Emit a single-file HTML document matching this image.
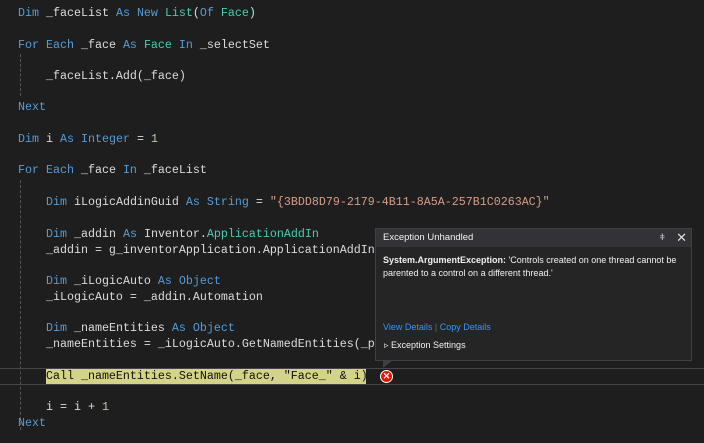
<!DOCTYPE html>
<html><head><style>
body{margin:0;width:704px;height:443px;background:#1e1e1e;overflow:hidden;position:relative;font-family:"Liberation Mono",monospace;}
.l{position:absolute;left:18px;font-size:11.67px;line-height:16px;color:#dcdcdc;white-space:pre;}
.k{color:#569cd6}.t{color:#4ec9b0}.s{color:#d69d85}.n{color:#b5cea8}
.g{position:absolute;left:20px;width:0;border-left:1px dashed #555;}
#pop{position:absolute;left:375px;top:228px;width:315px;height:131px;background:#252526;border:1px solid #3f3f46;font-family:"Liberation Sans",sans-serif;font-size:9px;color:#f1f1f1;}
#hd{height:18px;background:#333337;line-height:18px;padding-left:7px;font-size:9.5px;}
</style></head><body>
<div class="g" style="top:54px;height:42px"></div>
<div class="g" style="top:180px;height:250px"></div>
<div style="position:absolute;left:0;top:368px;width:704px;height:15px;border-top:1px solid #464646;border-bottom:1px solid #464646"></div>
<div style="position:absolute;left:46px;top:369px;width:320px;height:15px;background:#d3d38a"></div>
<div class="l" style="top:5px"><span class="k">Dim</span> _faceList <span class="k">As New</span> <span class="t">List</span>(<span class="k">Of</span> <span class="t">Face</span>)</div>
<div class="l" style="top:37px"><span class="k">For Each</span> _face <span class="k">As</span> <span class="t">Face</span> <span class="k">In</span> _selectSet</div>
<div class="l" style="top:68px">    _faceList.Add(_face)</div>
<div class="l" style="top:99px"><span class="k">Next</span></div>
<div class="l" style="top:131px"><span class="k">Dim</span> i <span class="k">As Integer</span> = <span class="n">1</span></div>
<div class="l" style="top:162px"><span class="k">For Each</span> _face <span class="k">In</span> _faceList</div>
<div class="l" style="top:194px">    <span class="k">Dim</span> iLogicAddinGuid <span class="k">As String</span> = <span class="s">"{3BDD8D79-2179-4B11-8A5A-257B1C0263AC}"</span></div>
<div class="l" style="top:226px">    <span class="k">Dim</span> _addin <span class="k">As</span> Inventor.<span class="t">ApplicationAddIn</span></div>
<div class="l" style="top:242px">    _addin = g_inventorApplication.ApplicationAddIns</div>
<div class="l" style="top:273px">    <span class="k">Dim</span> _iLogicAuto <span class="k">As Object</span></div>
<div class="l" style="top:289px">    _iLogicAuto = _addin.Automation</div>
<div class="l" style="top:320px">    <span class="k">Dim</span> _nameEntities <span class="k">As Object</span></div>
<div class="l" style="top:336px">    _nameEntities = _iLogicAuto.GetNamedEntities(_pa</div>
<div class="l" style="top:368px;color:#111">    Call _nameEntities.SetName(_face, "Face_" &amp; i)</div>
<div class="l" style="top:399px">    i = i + <span class="n">1</span></div>
<div class="l" style="top:415px"><span class="k">Next</span></div>
<div style="position:absolute;left:380px;top:370px;width:11px;height:11px;border-radius:50%;background:#e51400;border:1px solid #fff;color:#fff;font:bold 9px/11px 'Liberation Sans',sans-serif;text-align:center">✕</div>
<div style="position:absolute;left:383px;top:360px;width:0;height:0;border-left:10px solid #3f3f46;border-bottom:8px solid transparent"></div>
<div id="pop"><div id="hd">Exception Unhandled<span style="position:absolute;right:26px;top:0;color:#ccc">ǂ</span><span style="position:absolute;right:4px;top:0;font-size:13px;color:#ddd">✕</span></div>
<div style="padding:7px 7px 0;line-height:12.5px"><b>System.ArgumentException:</b> 'Controls created on one thread cannot be parented to a control on a different thread.'</div>
<div style="position:absolute;left:7px;top:93px;color:#3794ff">View Details <span style="color:#666">|</span> Copy Details</div>
<div style="position:absolute;left:8px;top:111px">▹ Exception Settings</div>
</div>
</body></html>
